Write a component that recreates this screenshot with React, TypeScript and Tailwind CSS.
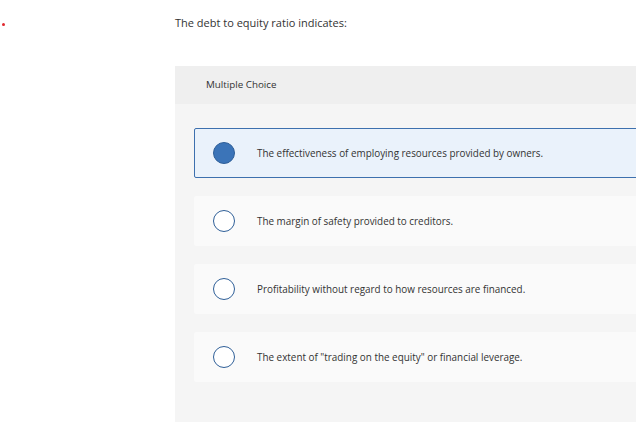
import React from 'react'

const options = [
  'The effectiveness of employing resources provided by owners.',
  'The margin of safety provided to creditors.',
  'Profitability without regard to how resources are financed.',
  'The extent of "trading on the equity" or financial leverage.',
]

function Radio({ checked }: { checked: boolean }) {
  return checked ? (
    <span className="block h-[22px] w-[22px] shrink-0 rounded-full border border-[#2f5f98] bg-[#3b74b8]" />
  ) : (
    <span className="block h-[22px] w-[22px] shrink-0 rounded-full border-[1.5px] border-[#2f5f98] bg-white" />
  )
}

export default function App() {
  return (
    <div className="relative h-[439px] w-[636px] overflow-hidden bg-white font-['Open_Sans',sans-serif] text-[#333]">
      <span className="absolute left-[2px] top-[23px] h-[3px] w-[3px] rounded-full bg-[#e0282e]" />
      <div className="pl-[175px] pt-[15px]">
        <p className="text-[11px] leading-[16px] text-[#333]">The debt to equity ratio indicates:</p>
        <div className="mt-[35px] w-[480px] bg-[#f5f5f5] pb-[40px]">
          <div className="flex h-[38px] items-center bg-[#efefef] pl-[31px] text-[9.8px] text-[#333]">
            Multiple Choice
          </div>
          <div className="flex flex-col gap-[18px] pl-[19px] pt-[24px]">
            {options.map((opt, i) => (
              <div
                key={i}
                className={
                  i === 0
                    ? 'flex h-[50px] items-center gap-[22px] rounded-[2px] border border-[#3d70ae] bg-[#eaf2fb] pl-[18px]'
                    : 'flex h-[50px] items-center gap-[22px] rounded-[2px] bg-[#fafafa] pl-[19px]'
                }
              >
                <Radio checked={i === 0} />
                <span className="text-[9.9px] text-[#333]">{opt}</span>
              </div>
            ))}
          </div>
        </div>
      </div>
    </div>
  )
}
